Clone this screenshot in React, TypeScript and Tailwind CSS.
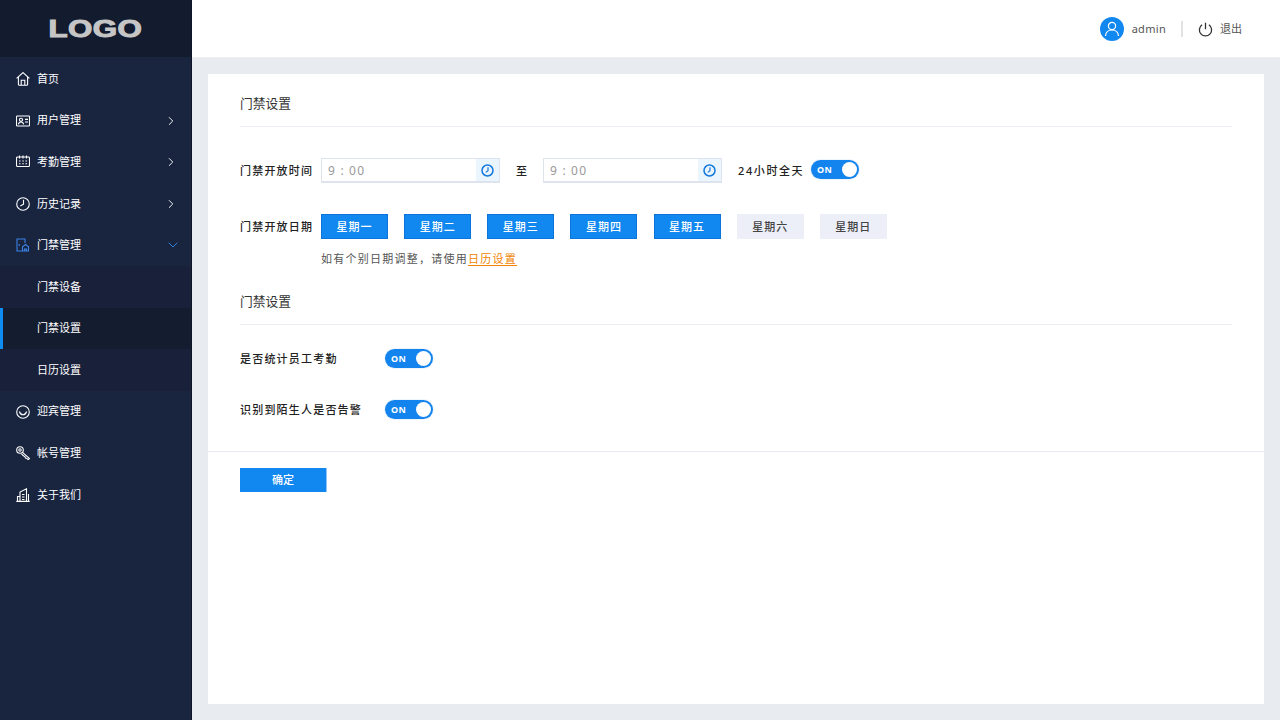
import React from "react";
import { ChevronRight, ChevronDown } from "lucide-react";

const S = (p: { children: React.ReactNode; c?: string }) => (
  <svg width="14" height="14" viewBox="0 0 14 14" fill="none" stroke={p.c || "#fff"} strokeWidth="1.100" className="shrink-0">
    {p.children}
  </svg>
);
const HomeI = () => (
  <S>
    <path d="M.6 6.400 7 .6l6.400 5.800M2.400 5v7.200q0 1 1 1h7.200q1 0 1-1V5M5.200 13.200V8.200h3.600v5" />
  </S>
);
const CardI = () => (
  <S>
    <rect x=".5" y="2" width="13" height="10" rx=".6" />
    <circle cx="5" cy="5.800" r="1.600" />
    <path d="M2.400 10.400c.3-1.600 1.300-2.400 2.600-2.400s2.300.8 2.600 2.400M9 5.400h3M9 8h3" />
  </S>
);
const CalI = () => (
  <S>
    <rect x=".5" y="2" width="13" height="9.500" rx="1" />
    <path d="M3.500.6v3M7 .6v3M10.500.6v3M3 6h1.500M6.300 6h1.500M9.500 6h1.500M3 8.800h1.500M6.300 8.800h1.500M9.500 8.800h1.500" />
  </S>
);
const ClockI = () => (
  <S>
    <circle cx="7" cy="7" r="6.300" />
    <path d="M7.500 2.800v4.400L4.300 9" />
  </S>
);
const DoorI = () => (
  <S c="#3b82e6">
    <path d="M6 13H1V1h8v4M3.200 6v2" />
    <path d="M6.500 13V8.800L9.500 6.500l3 2.300V13z" />
    <path d="M8.500 13v-2h2v2" />
  </S>
);
const SmileI = () => (
  <S>
    <circle cx="7" cy="7" r="6.300" />
    <path d="M3.400 6.500c.6 2.300 1.900 3.300 3.600 3.300s3-1 3.600-3.300" />
  </S>
);
const KeyI = () => (
  <S>
    <circle cx="4" cy="4" r="3.300" />
    <circle cx="4" cy="4" r="1.200" />
    <path d="m6.500 6.300 7 6.200-1.300 1.200-1.700-1.500-1-.2-.3-1-3.800-3" />
  </S>
);
const BuildI = () => (
  <S>
    <path d="M.3 13.400h13.400M1.500 13.400V8.500h2.500M4 13.400V4L10.500.8v12.600M12.500 13.400V6M6 6.500h2.500M6 9h2.500M6 11.500h2.500" />
  </S>
);

const Item = ({ icon, label, arrow }: { icon: React.ReactNode; label: string; arrow?: "r" | "d" }) => (
  <div className="flex h-[41.6px] items-center pl-[16px] pr-[13px]">
    <span className="flex w-[21px]">{icon}</span>
    <span className="flex-1 text-[11px] text-white">{label}</span>
    {arrow === "r" && <ChevronRight size={14} color="#f0f2f5" strokeWidth={1.700} />}
    {arrow === "d" && <ChevronDown size={16} color="#2f80dd" strokeWidth={1.500} className="-mr-[3px]" />}
  </div>
);
const Sub = ({ label, active }: { label: string; active?: boolean }) => (
  <div className={"flex h-[41.6px] items-center text-[11px] text-white " + (active ? "border-l-[3px] border-[#0f8cf1] bg-[#141c2f] pl-[34px]" : "pl-[37px]")}>{label}</div>
);

const Toggle = ({ lift }: { lift?: boolean }) => (
  <div className={"flex h-[19px] w-[48px] shrink-0 items-center justify-between rounded-full bg-[#1384ee] pl-[6px] pr-[2px] shadow-[0_0_0_1px_#eef4fb] " + (lift ? "mb-[2px]" : "")}>
    <span className="text-[9px] font-bold tracking-[0.500px] text-white">ON</span>
    <span className="h-[15.500px] w-[15.500px] rounded-full bg-white" />
  </div>
);

const TimeInput = () => (
  <div className="flex h-[25px] w-[179px] items-center border border-b-2 border-[#dfe3ee] bg-white">
    <span className="flex-1 pl-[6px] pt-[2px] text-[12px] tracking-[1.200px] text-[#9a9a9a]">9 : 00</span>
    <span className="flex h-full w-[23px] items-center justify-center bg-[#eaf5fd]">
      <svg width="13" height="13" viewBox="0 0 13 13" fill="none" stroke="#1278dc" strokeWidth="1.500">
        <circle cx="6.500" cy="6.500" r="5.500" />
        <path d="M7 3.300v3.400L4.800 8.400" strokeWidth="1.200" />
      </svg>
    </span>
  </div>
);

const Day = ({ label, on }: { label: string; on: boolean }) => (
  <div
    className={
      "flex h-[25px] w-[67px] items-center justify-center pt-[1px] text-[11px] tracking-[1px] " +
      (on ? "border border-[#0d74db] bg-[#1187f0] font-medium text-white" : "bg-[#eceff7] font-medium text-[#444]")
    }
  >
    {label}
  </div>
);

const Title = ({ children }: { children: React.ReactNode }) => (
  <div className="flex h-[53px] items-center border-b border-[#eceef3] pt-[8px] text-[12.750px] text-[#333]">{children}</div>
);

const label = "pt-[1px] text-[11px] font-medium tracking-[1.200px] text-[#222]";

export default function App() {
  return (
    <div className="flex h-[720px] w-[1280px] overflow-hidden bg-[#e8ebf0]" style={{ fontFamily: '"Noto Sans", "Noto Sans CJK SC", sans-serif' }}>
      <aside className="flex w-[192px] shrink-0 flex-col border-r border-[#0f1524] bg-[#19243f]">
        <div className="mb-[1.200px] flex h-[57px] shrink-0 items-center justify-center bg-[#131b2e] pt-[2px]">
          <span
            className="scale-x-[1.360] text-[23px] font-bold leading-none tracking-[0.300px] text-[#c6c6c6] [-webkit-text-stroke:1px_#c6c6c6]"
            style={{ fontFamily: '"Liberation Sans", sans-serif' }}
          >
            LOGO
          </span>
        </div>
        <Item icon={<HomeI />} label="首页" />
        <Item icon={<CardI />} label="用户管理" arrow="r" />
        <Item icon={<CalI />} label="考勤管理" arrow="r" />
        <Item icon={<ClockI />} label="历史记录" arrow="r" />
        <Item icon={<DoorI />} label="门禁管理" arrow="d" />
        <div className="bg-[#18203a]">
          <Sub label="门禁设备" />
          <Sub label="门禁设置" active />
          <Sub label="日历设置" />
        </div>
        <Item icon={<SmileI />} label="迎宾管理" />
        <Item icon={<KeyI />} label="帐号管理" />
        <Item icon={<BuildI />} label="关于我们" />
      </aside>
      <div className="flex min-w-0 flex-1 flex-col">
        <header className="flex h-[58px] shrink-0 items-center justify-end border-b border-[#eceef2] bg-white pr-[38px] pt-[1px]">
          <span className="flex h-[24px] w-[24px] items-center justify-center rounded-full bg-[#1187f0]">
            <svg width="16" height="16" viewBox="0 0 16 16" fill="none" stroke="#fff" strokeWidth="1.200">
              <circle cx="8" cy="5" r="3.600" />
              <path d="M1.500 15c.3-3.700 2.800-6 6.500-6s6.200 2.300 6.500 6" />
            </svg>
          </span>
          <span className="ml-[8px] text-[11px] tracking-[0.300px] text-[#555]">admin</span>
          <span className="ml-[15px] mr-[15px] h-[16px] w-[2px] bg-[#e2e2e2]" />
          <svg width="15" height="15" viewBox="0 0 14 14" fill="none" stroke="#333" strokeWidth="1.200">
            <path d="M7 .8v6M3.800 2.600a5.700 5.700 0 1 0 6.400 0" />
          </svg>
          <span className="ml-[7px] text-[11px] text-[#555]">退出</span>
        </header>
        <main className="m-[16px] flex flex-1 flex-col bg-white">
          <div className="px-[32px]">
            <Title>门禁设置</Title>
            <div className="mt-[31px] flex h-[25px] items-center">
              <span className={"w-[81px] " + label}>门禁开放时间</span>
              <TimeInput />
              <span className="w-[43px] pt-[1px] text-center text-[11px] font-medium text-[#222]">至</span>
              <TimeInput />
              <span className={"ml-[16px] mr-[8px] w-[65px] whitespace-nowrap !tracking-[1.600px] " + label}>24小时全天</span>
              <Toggle lift />
            </div>
            <div className="mt-[31px] flex h-[25px] items-center">
              <span className={"w-[81px] " + label}>门禁开放日期</span>
              <div className="flex gap-[16.150px]">
                <Day label="星期一" on />
                <Day label="星期二" on />
                <Day label="星期三" on />
                <Day label="星期四" on />
                <Day label="星期五" on />
                <Day label="星期六" on={false} />
                <Day label="星期日" on={false} />
              </div>
            </div>
            <div className="mt-[10px] pl-[81px] text-[11px] leading-[20px] tracking-[1.250px] text-[#555]">
              如有个别日期调整，请使用<span className="text-[#f08300] underline underline-offset-2">日历设置</span>
            </div>
            <div className="mt-[3px]">
              <Title>门禁设置</Title>
            </div>
            <div className="mt-[24px] flex h-[19px] items-center">
              <span className={"w-[145px] " + label}>是否统计员工考勤</span>
              <Toggle />
            </div>
            <div className="mt-[32px] flex h-[19px] items-center">
              <span className={"w-[145px] " + label}>识别到陌生人是否告警</span>
              <Toggle />
            </div>
          </div>
          <div className="mt-[32px] border-t border-[#e8eaf2] px-[32px] pt-[16px]">
            <button className="block h-[24px] w-[87px] border-r border-[#8cc6f7] bg-[#1187f0] text-[11px] font-medium text-white">确定</button>
          </div>
        </main>
      </div>
    </div>
  );
}
